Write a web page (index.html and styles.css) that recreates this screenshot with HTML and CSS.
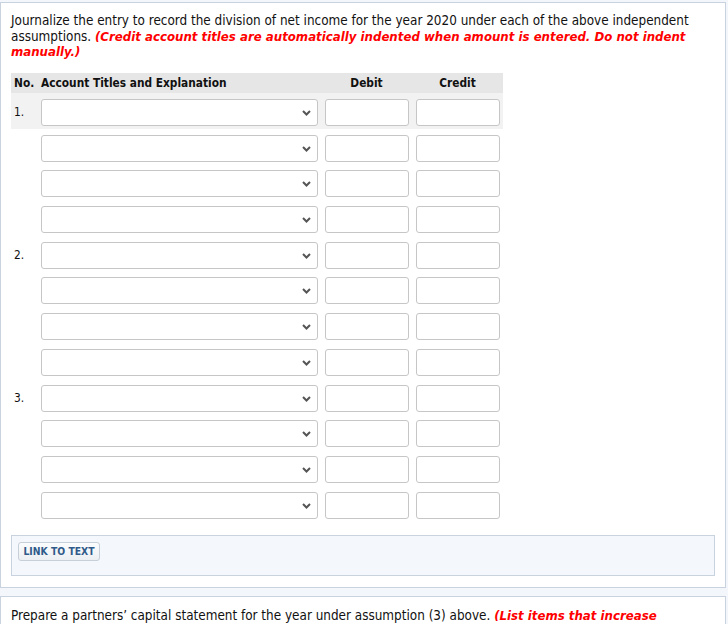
FILE: index.html
```html
<!DOCTYPE html>
<html>
<head>
<meta charset="utf-8">
<link rel="stylesheet" href="styles.css">
</head>
<body>
<div class="panel first">
  <p class="q">Journalize the entry to record the division of net income for the year 2020 under each of the above independent<br>assumptions. <em class="note">(Credit account titles are automatically indented when amount is entered. Do not indent<br>manually.)</em></p>

  <div class="journal">
    <div class="h no">No.</div>
    <div class="h acct">Account Titles and Explanation</div>
    <div class="h amt">Debit</div>
    <div class="h amt">Credit</div>

    <div class="row shaded">
      <div class="num">1.</div>
      <div class="cell"><div class="sel"><svg width="9" height="6" viewBox="0 0 9 6"><path d="M1 1l3.5 3.5L8 1" fill="none" stroke="#555" stroke-width="2"/></svg></div></div>
      <div class="cell"><div class="inp"></div></div>
      <div class="cell"><div class="inp"></div></div>
    </div>
    <div class="row">
      <div class="num"></div>
      <div class="cell"><div class="sel"><svg width="9" height="6" viewBox="0 0 9 6"><path d="M1 1l3.5 3.5L8 1" fill="none" stroke="#555" stroke-width="2"/></svg></div></div>
      <div class="cell"><div class="inp"></div></div>
      <div class="cell"><div class="inp"></div></div>
    </div>
    <div class="row">
      <div class="num"></div>
      <div class="cell"><div class="sel"><svg width="9" height="6" viewBox="0 0 9 6"><path d="M1 1l3.5 3.5L8 1" fill="none" stroke="#555" stroke-width="2"/></svg></div></div>
      <div class="cell"><div class="inp"></div></div>
      <div class="cell"><div class="inp"></div></div>
    </div>
    <div class="row">
      <div class="num"></div>
      <div class="cell"><div class="sel"><svg width="9" height="6" viewBox="0 0 9 6"><path d="M1 1l3.5 3.5L8 1" fill="none" stroke="#555" stroke-width="2"/></svg></div></div>
      <div class="cell"><div class="inp"></div></div>
      <div class="cell"><div class="inp"></div></div>
    </div>

    <div class="row">
      <div class="num">2.</div>
      <div class="cell"><div class="sel"><svg width="9" height="6" viewBox="0 0 9 6"><path d="M1 1l3.5 3.5L8 1" fill="none" stroke="#555" stroke-width="2"/></svg></div></div>
      <div class="cell"><div class="inp"></div></div>
      <div class="cell"><div class="inp"></div></div>
    </div>
    <div class="row">
      <div class="num"></div>
      <div class="cell"><div class="sel"><svg width="9" height="6" viewBox="0 0 9 6"><path d="M1 1l3.5 3.5L8 1" fill="none" stroke="#555" stroke-width="2"/></svg></div></div>
      <div class="cell"><div class="inp"></div></div>
      <div class="cell"><div class="inp"></div></div>
    </div>
    <div class="row">
      <div class="num"></div>
      <div class="cell"><div class="sel"><svg width="9" height="6" viewBox="0 0 9 6"><path d="M1 1l3.5 3.5L8 1" fill="none" stroke="#555" stroke-width="2"/></svg></div></div>
      <div class="cell"><div class="inp"></div></div>
      <div class="cell"><div class="inp"></div></div>
    </div>
    <div class="row">
      <div class="num"></div>
      <div class="cell"><div class="sel"><svg width="9" height="6" viewBox="0 0 9 6"><path d="M1 1l3.5 3.5L8 1" fill="none" stroke="#555" stroke-width="2"/></svg></div></div>
      <div class="cell"><div class="inp"></div></div>
      <div class="cell"><div class="inp"></div></div>
    </div>

    <div class="row">
      <div class="num">3.</div>
      <div class="cell"><div class="sel"><svg width="9" height="6" viewBox="0 0 9 6"><path d="M1 1l3.5 3.5L8 1" fill="none" stroke="#555" stroke-width="2"/></svg></div></div>
      <div class="cell"><div class="inp"></div></div>
      <div class="cell"><div class="inp"></div></div>
    </div>
    <div class="row">
      <div class="num"></div>
      <div class="cell"><div class="sel"><svg width="9" height="6" viewBox="0 0 9 6"><path d="M1 1l3.5 3.5L8 1" fill="none" stroke="#555" stroke-width="2"/></svg></div></div>
      <div class="cell"><div class="inp"></div></div>
      <div class="cell"><div class="inp"></div></div>
    </div>
    <div class="row">
      <div class="num"></div>
      <div class="cell"><div class="sel"><svg width="9" height="6" viewBox="0 0 9 6"><path d="M1 1l3.5 3.5L8 1" fill="none" stroke="#555" stroke-width="2"/></svg></div></div>
      <div class="cell"><div class="inp"></div></div>
      <div class="cell"><div class="inp"></div></div>
    </div>
    <div class="row">
      <div class="num"></div>
      <div class="cell"><div class="sel"><svg width="9" height="6" viewBox="0 0 9 6"><path d="M1 1l3.5 3.5L8 1" fill="none" stroke="#555" stroke-width="2"/></svg></div></div>
      <div class="cell"><div class="inp"></div></div>
      <div class="cell"><div class="inp"></div></div>
    </div>
  </div>

  <div class="linkbox">
    <span class="btn">LINK TO TEXT</span>
  </div>
</div>

<div class="panel second">
  <p class="q">Prepare a partners’ capital statement for the year under assumption (3) above. <em class="note">(List items that increase partners’ capital first.)</em></p>
</div>
</body>
</html>
```

FILE: styles.css
```css
html, body {
  margin: 0;
  padding: 0;
}
body {
  background: #f3f6fa;
  font-family: "DejaVu Sans Condensed", "DejaVu Sans", sans-serif;
  color: #111;
  padding-top: 2px;
  padding-right: 2px;
}
.panel {
  background: #fff;
  border: 1px solid #c9d3df;
  padding: 10px 10px 11px 10px;
}
.second {
  margin-top: 8px;
  padding-top: 10px;
}
.second .q {
  line-height: 18px;
}
.q {
  margin: 0;
  font-size: 13.4px;
  line-height: 15.5px;
}
.note {
  color: #ff0000;
  font-weight: bold;
  font-style: italic;
  font-size: 13.1px;
}
.journal {
  margin-top: 13.5px;
  width: 492px;
  display: grid;
  grid-template-columns: 28px 282px 91px 91px;
  font-size: 11.8px;
}
.h {
  background: #e6e6e6;
  height: 20px;
  line-height: 20px;
  font-weight: bold;
  color: #111;
}
.h.no {
  padding-left: 3px;
}
.h.acct {
  padding-left: 2px;
}
.h.amt {
  text-align: center;
}
.row {
  display: contents;
}
.row > div {
  height: 35.7px;
  box-sizing: border-box;
  padding-top: 6px;
}
.row.shaded > div {
  background: #f2f2f2;
}
.num {
  padding-left: 3px;
  line-height: 27px;
}
.row > .cell:nth-child(2) {
  padding-left: 2px;
}
.row > .cell:nth-child(3),
.row > .cell:nth-child(4) {
  padding-left: 4px;
}
.sel {
  width: 277px;
  height: 27px;
  box-sizing: border-box;
  border: 1px solid #c6c6c6;
  border-radius: 3px;
  background: #fff;
  display: flex;
  align-items: center;
  justify-content: flex-end;
  padding-right: 6px;
}
.sel svg {
  display: block;
  margin-top: 1px;
}
.inp {
  width: 84px;
  height: 27px;
  box-sizing: border-box;
  border: 1px solid #c6c6c6;
  border-radius: 3px;
  background: #fff;
}
.linkbox {
  margin-top: 13.6px;
  background: #f4f7fb;
  border: 1px solid #c9d3df;
  padding: 6px;
  box-sizing: border-box;
  height: 41px;
}
.btn {
  display: inline-block;
  width: 82px;
  height: 19px;
  box-sizing: border-box;
  border: 1px solid #c7cfd9;
  border-radius: 3px;
  background: linear-gradient(#fbfcfd, #eceff3);
  color: #2f5a8a;
  font-size: 10.3px;
  font-weight: bold;
  text-align: center;
  line-height: 17px;
  vertical-align: top;
}
```
